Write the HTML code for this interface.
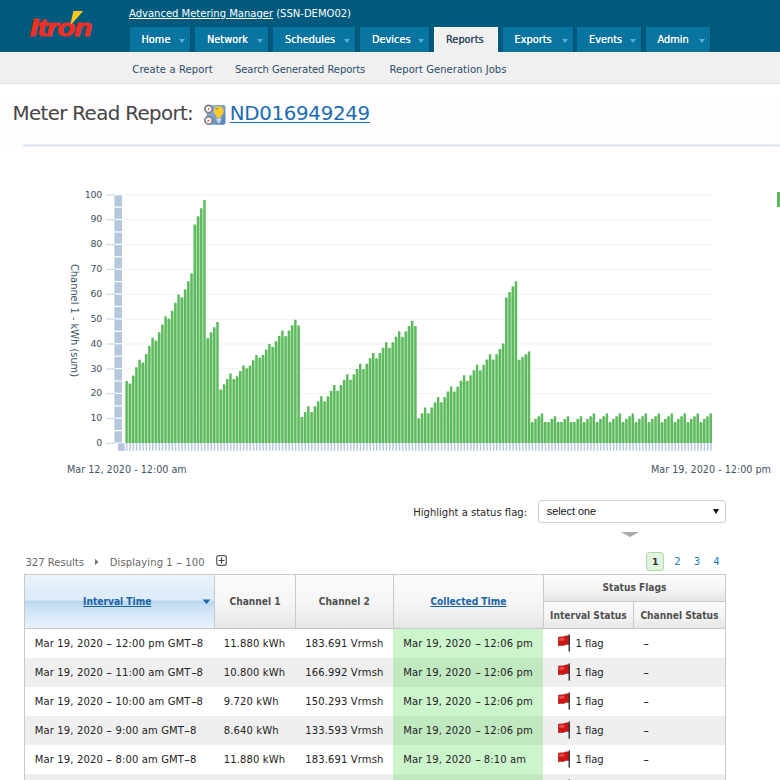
<!DOCTYPE html>
<html lang="en">
<head>
<meta charset="utf-8">
<title>Meter Read Report: ND016949249 - Advanced Metering Manager</title>
<style>
html,body{margin:0;padding:0;}
body{width:780px;height:780px;overflow:hidden;background:#fff;position:relative;
  font-family:"DejaVu Sans","Liberation Sans",sans-serif;font-size:10px;color:#333;}
a{color:inherit;}
#hdr{position:absolute;left:0;top:0;width:780px;height:52px;background:#005a7e;}
#logo{position:absolute;left:30px;top:13px;height:30px;line-height:30px;font-family:"Liberation Sans",sans-serif;
  font-weight:bold;font-style:italic;font-size:24.2px;color:#ee3124;letter-spacing:-0.45px;-webkit-text-stroke:1.05px #ee3124;
  transform:scaleX(1.2);transform-origin:0 50%;}
#spark{position:absolute;left:0;top:0;}
#app{position:absolute;left:129px;top:3.7px;height:20px;line-height:20px;color:#fff;font-size:10px;white-space:nowrap;}
#app a{text-decoration:underline;text-underline-offset:1px;}
.tab{position:absolute;top:27.4px;height:24.6px;background:#0a74a1;color:#fff;box-shadow:1px 0 0 #00506f;
  line-height:24.6px;font-size:10px;white-space:nowrap;}
.tab .tl{position:absolute;left:12px;top:1.1px;font-size:9.8px;text-shadow:0 0 0.6px #fff;}
.tab.act{background:#f0f0f0;color:#2f465c;box-shadow:inset 1px 1px 0 #fcfcfc,inset -1px 0 0 #fcfcfc;height:25.6px;z-index:2;}
.tab.act .tl{text-shadow:0 0 0.4px #2f465c;}
.tab .dd{position:absolute;right:5px;top:11.3px;width:0;height:0;border-left:3.7px solid transparent;border-right:3.7px solid transparent;border-top:4px solid #5ab0d4;}
#sub{position:absolute;left:0;top:52px;width:780px;height:31px;background:#f0f0f0;border-bottom:1px solid #dedede;box-shadow:inset 0 1px 0 #fbfbfb;}
#sub a{position:absolute;top:7.5px;height:20px;line-height:20px;color:#2e4c68;text-decoration:none;font-size:10px;letter-spacing:-0.08px;white-space:nowrap;}
#ttl{position:absolute;left:0;top:97px;width:780px;height:47.5px;background:#fefcfc;}
#ttlb{position:absolute;left:22.4px;top:144.2px;width:758px;height:3px;background:linear-gradient(#eef2f6,#e1e7ef 40%,#e3e9f0 70%,#f1f4f8);border-radius:2px 0 0 2px;}
#h1{position:absolute;left:12.5px;top:98.5px;height:30px;line-height:30px;font-size:19.8px;letter-spacing:-0.62px;color:#454545;white-space:nowrap;margin:0;font-weight:normal;}
#h1 a{position:absolute;left:217.3px;top:0;letter-spacing:-0.3px;color:#1a6db4;text-decoration:underline;text-decoration-thickness:1.4px;text-underline-offset:2px;}
#h1 svg{position:absolute;left:191.2px;top:5.3px;}
#chartw{position:absolute;left:0;top:170px;width:780px;height:320px;}
#hl{position:absolute;left:327px;top:502.5px;width:200px;height:20px;line-height:20px;text-align:right;font-size:10px;color:#262626;white-space:nowrap;}
#sel{position:absolute;left:538.2px;top:499.7px;width:186px;height:21.8px;border:1px solid #d0d0d0;border-radius:2.5px;background:#fff;box-sizing:content-box;}
#sel span{position:absolute;left:7.6px;top:0;height:21.6px;line-height:21.6px;font-family:"Liberation Sans",sans-serif;font-size:10.8px;color:#111;}
#sel i{position:absolute;right:6.2px;top:8.8px;width:0;height:0;border-left:3.1px solid transparent;border-right:3.1px solid transparent;border-top:5.6px solid #111;}
#arr{position:absolute;left:620.5px;top:531.6px;width:0;height:0;border-left:9.5px solid transparent;border-right:9.5px solid transparent;border-top:5px solid #aaa;}
#res{position:absolute;left:25.5px;top:552.5px;height:20px;line-height:20px;font-size:10px;color:#666;white-space:nowrap;}
#pg a{position:absolute;top:552px;width:18px;height:20px;line-height:20px;text-align:center;color:#2478bd;text-decoration:none;font-size:10px;}
#pg a.cur{top:552px;border:1px solid #b5d9b0;background:#e0f3dc;border-radius:3px;width:16px;height:17.4px;line-height:17.8px;color:#333;font-weight:bold;font-size:9.4px;}
#tbl{position:absolute;left:24.2px;top:574.2px;width:701.8px;height:210px;border-left:1px solid #c9c9c9;border-right:1px solid #c9c9c9;box-sizing:border-box;}
.th{position:absolute;box-sizing:border-box;border:1px solid #c9c9c9;border-left:none;background:linear-gradient(#fbfbfb 0%,#f6f6f6 50%,#e6e6e6 100%);
  font-family:"DejaVu Sans Condensed","DejaVu Sans","Liberation Sans",sans-serif;font-weight:bold;color:#505050;text-align:center;font-size:10.15px;white-space:nowrap;}
.th a{color:#1c64a4;text-decoration:underline;}
.hy{display:inline-block;width:5.9px;text-align:center;transform:scaleX(1.7);letter-spacing:0;}
.th.srt{background:linear-gradient(#e9f3fb 0%,#dcebf8 47%,#b9d7f0 50%,#c9e0f4 60%,#dcebf8 80%,#e6f1fb 100%);}
.row{position:absolute;left:0;width:700px;height:29px;background:#fff;}
.row.alt{background:#efefef;}
.c{position:absolute;top:0;height:29px;line-height:29.8px;font-size:10px;letter-spacing:0.13px;color:#222;white-space:nowrap;}
.c1{left:9.6px;}
.c2{left:198.5px;}
.c3{left:280px;}
.c4{left:368.2px;width:149.3px;padding-left:9.8px;background:#ccf5cc;box-sizing:border-box;}
.alt .c4{background:#c0e9c0;}
.c5{left:533px;}
.c6{left:617.5px;}
.flag{position:absolute;left:0;top:5.2px;}
.ft{position:absolute;left:17.4px;top:0;letter-spacing:-0.05px;}
</style>
</head>
<body>
<div id="hdr">
<div id="logo">Itron</div>
<svg id="spark" width="120" height="52"><polygon points="73.4,11 83.2,11 71.4,24.2 70.6,23.6" fill="#fbc81e"/></svg>
<div id="app"><a>Advanced Metering Manager</a> (SSN-DEMO02)</div>
<div class="tab" style="left:129.5px;width:60.5px"><span class="tl">Home</span><i class="dd"></i></div>
<div class="tab" style="left:195.0px;width:73.0px"><span class="tl">Network</span><i class="dd"></i></div>
<div class="tab" style="left:273.0px;width:82.0px"><span class="tl">Schedules</span><i class="dd"></i></div>
<div class="tab" style="left:360.0px;width:69.0px"><span class="tl">Devices</span><i class="dd"></i></div>
<div class="tab act" style="left:434.0px;width:63.5px"><span class="tl">Reports</span></div>
<div class="tab" style="left:502.5px;width:70.0px"><span class="tl">Exports</span><i class="dd"></i></div>
<div class="tab" style="left:577.0px;width:64.0px"><span class="tl">Events</span><i class="dd"></i></div>
<div class="tab" style="left:645.5px;width:64.2px"><span class="tl">Admin</span><i class="dd"></i></div>
</div>
<div id="sub">
<a style="left:132.3px;letter-spacing:0.1px">Create a Report</a>
<a style="left:235px">Search Generated Reports</a>
<a style="left:389.5px;letter-spacing:0.05px">Report Generation Jobs</a>
</div>
<div id="ttl"></div><div id="ttlb"></div>
<h1 id="h1">Meter Read Report: <svg width="22" height="22" viewBox="0 0 22 22">
<defs><linearGradient id="ib" x1="0" y1="0" x2="1" y2="1"><stop offset="0" stop-color="#9fbfe0"/><stop offset="1" stop-color="#4f7fb4"/></linearGradient></defs>
<rect x="2.6" y="1" width="18.9" height="19.8" rx="2.4" fill="url(#ib)"/>
<circle cx="4.6" cy="5" r="3.7" fill="#fbfbfb" stroke="#7c7c7c" stroke-width="1.7"/>
<circle cx="4.6" cy="16.4" r="3.7" fill="#fbfbfb" stroke="#7c7c7c" stroke-width="1.7"/>
<path d="M4 6 L5.2 3.8" stroke="#e8585c" stroke-width="1.1"/>
<path d="M3.4 17.4 L5.8 15.8" stroke="#e8585c" stroke-width="1.2"/>
<path d="M14.8 2.2 a4.9 4.9 0 0 1 3.1 8.7 c-0.6 0.8 -0.7 1.6 -0.8 2.9 h-4.6 c-0.1 -1.3 -0.2 -2.1 -0.8 -2.9 a4.9 4.9 0 0 1 3.1 -8.7z" fill="#fbc92e"/>
<path d="M12.4 5.6 l1.6 -1.4" stroke="#5c9a46" stroke-width="1.2"/>
<rect x="12.6" y="14.6" width="4.4" height="1.2" fill="#eef3f8"/><rect x="12.6" y="16.4" width="4.4" height="1.2" fill="#eef3f8"/><path d="M13.2 18.2 h3.2 l-1.6 1.4z" fill="#eef3f8"/>
</svg><a>ND016949249</a></h1>
<div id="chartw">
<svg id="chart" width="780" height="320" viewBox="0 170 780 320">
<rect x="125" y="442.90" width="587" height="1" fill="#f0f0f0"/>
<rect x="106.2" y="442.80" width="9" height="1.2" fill="#cdd9e9"/>
<rect x="125" y="418.05" width="587" height="1" fill="#f0f0f0"/>
<rect x="106.2" y="417.95" width="9" height="1.2" fill="#cdd9e9"/>
<rect x="125" y="393.20" width="587" height="1" fill="#f0f0f0"/>
<rect x="106.2" y="393.10" width="9" height="1.2" fill="#cdd9e9"/>
<rect x="125" y="368.35" width="587" height="1" fill="#f0f0f0"/>
<rect x="106.2" y="368.25" width="9" height="1.2" fill="#cdd9e9"/>
<rect x="125" y="343.50" width="587" height="1" fill="#f0f0f0"/>
<rect x="106.2" y="343.40" width="9" height="1.2" fill="#cdd9e9"/>
<rect x="125" y="318.65" width="587" height="1" fill="#f0f0f0"/>
<rect x="106.2" y="318.55" width="9" height="1.2" fill="#cdd9e9"/>
<rect x="125" y="293.80" width="587" height="1" fill="#f0f0f0"/>
<rect x="106.2" y="293.70" width="9" height="1.2" fill="#cdd9e9"/>
<rect x="125" y="268.95" width="587" height="1" fill="#f0f0f0"/>
<rect x="106.2" y="268.85" width="9" height="1.2" fill="#cdd9e9"/>
<rect x="125" y="244.10" width="587" height="1" fill="#f0f0f0"/>
<rect x="106.2" y="244.00" width="9" height="1.2" fill="#cdd9e9"/>
<rect x="125" y="219.25" width="587" height="1" fill="#f0f0f0"/>
<rect x="106.2" y="219.15" width="9" height="1.2" fill="#cdd9e9"/>
<rect x="125" y="194.40" width="587" height="1" fill="#f0f0f0"/>
<rect x="106.2" y="194.30" width="9" height="1.2" fill="#cdd9e9"/>
<rect x="114.4" y="195.30" width="7.7" height="11.2" fill="#b7c8dd"/>
<rect x="114.4" y="207.72" width="7.7" height="11.2" fill="#b7c8dd"/>
<rect x="114.4" y="220.14" width="7.7" height="11.2" fill="#b7c8dd"/>
<rect x="114.4" y="232.56" width="7.7" height="11.2" fill="#b7c8dd"/>
<rect x="114.4" y="244.98" width="7.7" height="11.2" fill="#b7c8dd"/>
<rect x="114.4" y="257.40" width="7.7" height="11.2" fill="#b7c8dd"/>
<rect x="114.4" y="269.82" width="7.7" height="11.2" fill="#b7c8dd"/>
<rect x="114.4" y="282.24" width="7.7" height="11.2" fill="#b7c8dd"/>
<rect x="114.4" y="294.66" width="7.7" height="11.2" fill="#b7c8dd"/>
<rect x="114.4" y="307.08" width="7.7" height="11.2" fill="#b7c8dd"/>
<rect x="114.4" y="319.50" width="7.7" height="11.2" fill="#b7c8dd"/>
<rect x="114.4" y="331.92" width="7.7" height="11.2" fill="#b7c8dd"/>
<rect x="114.4" y="344.34" width="7.7" height="11.2" fill="#b7c8dd"/>
<rect x="114.4" y="356.76" width="7.7" height="11.2" fill="#b7c8dd"/>
<rect x="114.4" y="369.18" width="7.7" height="11.2" fill="#b7c8dd"/>
<rect x="114.4" y="381.60" width="7.7" height="11.2" fill="#b7c8dd"/>
<rect x="114.4" y="394.02" width="7.7" height="11.2" fill="#b7c8dd"/>
<rect x="114.4" y="406.44" width="7.7" height="11.2" fill="#b7c8dd"/>
<rect x="114.4" y="418.86" width="7.7" height="11.2" fill="#b7c8dd"/>
<rect x="114.4" y="431.28" width="7.7" height="11.2" fill="#b7c8dd"/>
<rect x="118" y="443.2" width="6.8" height="7.6" fill="#b7c8dd"/>
<rect x="126.10" y="443.2" width="1.5" height="7.6" fill="#b9c9de"/>
<rect x="129.34" y="443.2" width="1.5" height="7.6" fill="#b9c9de"/>
<rect x="132.59" y="443.2" width="1.5" height="7.6" fill="#b9c9de"/>
<rect x="135.83" y="443.2" width="1.5" height="7.6" fill="#b9c9de"/>
<rect x="139.08" y="443.2" width="1.5" height="7.6" fill="#b9c9de"/>
<rect x="142.32" y="443.2" width="1.5" height="7.6" fill="#b9c9de"/>
<rect x="145.57" y="443.2" width="1.5" height="7.6" fill="#b9c9de"/>
<rect x="148.81" y="443.2" width="1.5" height="7.6" fill="#b9c9de"/>
<rect x="152.06" y="443.2" width="1.5" height="7.6" fill="#b9c9de"/>
<rect x="155.31" y="443.2" width="1.5" height="7.6" fill="#b9c9de"/>
<rect x="158.55" y="443.2" width="1.5" height="7.6" fill="#b9c9de"/>
<rect x="161.79" y="443.2" width="1.5" height="7.6" fill="#b9c9de"/>
<rect x="165.04" y="443.2" width="1.5" height="7.6" fill="#b9c9de"/>
<rect x="168.28" y="443.2" width="1.5" height="7.6" fill="#b9c9de"/>
<rect x="171.53" y="443.2" width="1.5" height="7.6" fill="#b9c9de"/>
<rect x="174.78" y="443.2" width="1.5" height="7.6" fill="#b9c9de"/>
<rect x="178.02" y="443.2" width="1.5" height="7.6" fill="#b9c9de"/>
<rect x="181.26" y="443.2" width="1.5" height="7.6" fill="#b9c9de"/>
<rect x="184.51" y="443.2" width="1.5" height="7.6" fill="#b9c9de"/>
<rect x="187.75" y="443.2" width="1.5" height="7.6" fill="#b9c9de"/>
<rect x="191.00" y="443.2" width="1.5" height="7.6" fill="#b9c9de"/>
<rect x="194.25" y="443.2" width="1.5" height="7.6" fill="#b9c9de"/>
<rect x="197.49" y="443.2" width="1.5" height="7.6" fill="#b9c9de"/>
<rect x="200.74" y="443.2" width="1.5" height="7.6" fill="#b9c9de"/>
<rect x="203.98" y="443.2" width="1.5" height="7.6" fill="#b9c9de"/>
<rect x="207.22" y="443.2" width="1.5" height="7.6" fill="#b9c9de"/>
<rect x="210.47" y="443.2" width="1.5" height="7.6" fill="#b9c9de"/>
<rect x="213.72" y="443.2" width="1.5" height="7.6" fill="#b9c9de"/>
<rect x="216.96" y="443.2" width="1.5" height="7.6" fill="#b9c9de"/>
<rect x="220.20" y="443.2" width="1.5" height="7.6" fill="#b9c9de"/>
<rect x="223.45" y="443.2" width="1.5" height="7.6" fill="#b9c9de"/>
<rect x="226.69" y="443.2" width="1.5" height="7.6" fill="#b9c9de"/>
<rect x="229.94" y="443.2" width="1.5" height="7.6" fill="#b9c9de"/>
<rect x="233.19" y="443.2" width="1.5" height="7.6" fill="#b9c9de"/>
<rect x="236.43" y="443.2" width="1.5" height="7.6" fill="#b9c9de"/>
<rect x="239.68" y="443.2" width="1.5" height="7.6" fill="#b9c9de"/>
<rect x="242.92" y="443.2" width="1.5" height="7.6" fill="#b9c9de"/>
<rect x="246.16" y="443.2" width="1.5" height="7.6" fill="#b9c9de"/>
<rect x="249.41" y="443.2" width="1.5" height="7.6" fill="#b9c9de"/>
<rect x="252.66" y="443.2" width="1.5" height="7.6" fill="#b9c9de"/>
<rect x="255.90" y="443.2" width="1.5" height="7.6" fill="#b9c9de"/>
<rect x="259.15" y="443.2" width="1.5" height="7.6" fill="#b9c9de"/>
<rect x="262.39" y="443.2" width="1.5" height="7.6" fill="#b9c9de"/>
<rect x="265.63" y="443.2" width="1.5" height="7.6" fill="#b9c9de"/>
<rect x="268.88" y="443.2" width="1.5" height="7.6" fill="#b9c9de"/>
<rect x="272.12" y="443.2" width="1.5" height="7.6" fill="#b9c9de"/>
<rect x="275.37" y="443.2" width="1.5" height="7.6" fill="#b9c9de"/>
<rect x="278.62" y="443.2" width="1.5" height="7.6" fill="#b9c9de"/>
<rect x="281.86" y="443.2" width="1.5" height="7.6" fill="#b9c9de"/>
<rect x="285.10" y="443.2" width="1.5" height="7.6" fill="#b9c9de"/>
<rect x="288.35" y="443.2" width="1.5" height="7.6" fill="#b9c9de"/>
<rect x="291.59" y="443.2" width="1.5" height="7.6" fill="#b9c9de"/>
<rect x="294.84" y="443.2" width="1.5" height="7.6" fill="#b9c9de"/>
<rect x="298.08" y="443.2" width="1.5" height="7.6" fill="#b9c9de"/>
<rect x="301.33" y="443.2" width="1.5" height="7.6" fill="#b9c9de"/>
<rect x="304.57" y="443.2" width="1.5" height="7.6" fill="#b9c9de"/>
<rect x="307.82" y="443.2" width="1.5" height="7.6" fill="#b9c9de"/>
<rect x="311.06" y="443.2" width="1.5" height="7.6" fill="#b9c9de"/>
<rect x="314.31" y="443.2" width="1.5" height="7.6" fill="#b9c9de"/>
<rect x="317.56" y="443.2" width="1.5" height="7.6" fill="#b9c9de"/>
<rect x="320.80" y="443.2" width="1.5" height="7.6" fill="#b9c9de"/>
<rect x="324.05" y="443.2" width="1.5" height="7.6" fill="#b9c9de"/>
<rect x="327.29" y="443.2" width="1.5" height="7.6" fill="#b9c9de"/>
<rect x="330.54" y="443.2" width="1.5" height="7.6" fill="#b9c9de"/>
<rect x="333.78" y="443.2" width="1.5" height="7.6" fill="#b9c9de"/>
<rect x="337.03" y="443.2" width="1.5" height="7.6" fill="#b9c9de"/>
<rect x="340.27" y="443.2" width="1.5" height="7.6" fill="#b9c9de"/>
<rect x="343.52" y="443.2" width="1.5" height="7.6" fill="#b9c9de"/>
<rect x="346.76" y="443.2" width="1.5" height="7.6" fill="#b9c9de"/>
<rect x="350.00" y="443.2" width="1.5" height="7.6" fill="#b9c9de"/>
<rect x="353.25" y="443.2" width="1.5" height="7.6" fill="#b9c9de"/>
<rect x="356.50" y="443.2" width="1.5" height="7.6" fill="#b9c9de"/>
<rect x="359.74" y="443.2" width="1.5" height="7.6" fill="#b9c9de"/>
<rect x="362.99" y="443.2" width="1.5" height="7.6" fill="#b9c9de"/>
<rect x="366.23" y="443.2" width="1.5" height="7.6" fill="#b9c9de"/>
<rect x="369.47" y="443.2" width="1.5" height="7.6" fill="#b9c9de"/>
<rect x="372.72" y="443.2" width="1.5" height="7.6" fill="#b9c9de"/>
<rect x="375.96" y="443.2" width="1.5" height="7.6" fill="#b9c9de"/>
<rect x="379.21" y="443.2" width="1.5" height="7.6" fill="#b9c9de"/>
<rect x="382.45" y="443.2" width="1.5" height="7.6" fill="#b9c9de"/>
<rect x="385.70" y="443.2" width="1.5" height="7.6" fill="#b9c9de"/>
<rect x="388.94" y="443.2" width="1.5" height="7.6" fill="#b9c9de"/>
<rect x="392.19" y="443.2" width="1.5" height="7.6" fill="#b9c9de"/>
<rect x="395.44" y="443.2" width="1.5" height="7.6" fill="#b9c9de"/>
<rect x="398.68" y="443.2" width="1.5" height="7.6" fill="#b9c9de"/>
<rect x="401.93" y="443.2" width="1.5" height="7.6" fill="#b9c9de"/>
<rect x="405.17" y="443.2" width="1.5" height="7.6" fill="#b9c9de"/>
<rect x="408.42" y="443.2" width="1.5" height="7.6" fill="#b9c9de"/>
<rect x="411.66" y="443.2" width="1.5" height="7.6" fill="#b9c9de"/>
<rect x="414.91" y="443.2" width="1.5" height="7.6" fill="#b9c9de"/>
<rect x="418.15" y="443.2" width="1.5" height="7.6" fill="#b9c9de"/>
<rect x="421.40" y="443.2" width="1.5" height="7.6" fill="#b9c9de"/>
<rect x="424.64" y="443.2" width="1.5" height="7.6" fill="#b9c9de"/>
<rect x="427.89" y="443.2" width="1.5" height="7.6" fill="#b9c9de"/>
<rect x="431.13" y="443.2" width="1.5" height="7.6" fill="#b9c9de"/>
<rect x="434.38" y="443.2" width="1.5" height="7.6" fill="#b9c9de"/>
<rect x="437.62" y="443.2" width="1.5" height="7.6" fill="#b9c9de"/>
<rect x="440.86" y="443.2" width="1.5" height="7.6" fill="#b9c9de"/>
<rect x="444.11" y="443.2" width="1.5" height="7.6" fill="#b9c9de"/>
<rect x="447.35" y="443.2" width="1.5" height="7.6" fill="#b9c9de"/>
<rect x="450.60" y="443.2" width="1.5" height="7.6" fill="#b9c9de"/>
<rect x="453.84" y="443.2" width="1.5" height="7.6" fill="#b9c9de"/>
<rect x="457.09" y="443.2" width="1.5" height="7.6" fill="#b9c9de"/>
<rect x="460.33" y="443.2" width="1.5" height="7.6" fill="#b9c9de"/>
<rect x="463.58" y="443.2" width="1.5" height="7.6" fill="#b9c9de"/>
<rect x="466.82" y="443.2" width="1.5" height="7.6" fill="#b9c9de"/>
<rect x="470.07" y="443.2" width="1.5" height="7.6" fill="#b9c9de"/>
<rect x="473.31" y="443.2" width="1.5" height="7.6" fill="#b9c9de"/>
<rect x="476.56" y="443.2" width="1.5" height="7.6" fill="#b9c9de"/>
<rect x="479.81" y="443.2" width="1.5" height="7.6" fill="#b9c9de"/>
<rect x="483.05" y="443.2" width="1.5" height="7.6" fill="#b9c9de"/>
<rect x="486.30" y="443.2" width="1.5" height="7.6" fill="#b9c9de"/>
<rect x="489.54" y="443.2" width="1.5" height="7.6" fill="#b9c9de"/>
<rect x="492.79" y="443.2" width="1.5" height="7.6" fill="#b9c9de"/>
<rect x="496.03" y="443.2" width="1.5" height="7.6" fill="#b9c9de"/>
<rect x="499.28" y="443.2" width="1.5" height="7.6" fill="#b9c9de"/>
<rect x="502.52" y="443.2" width="1.5" height="7.6" fill="#b9c9de"/>
<rect x="505.77" y="443.2" width="1.5" height="7.6" fill="#b9c9de"/>
<rect x="509.01" y="443.2" width="1.5" height="7.6" fill="#b9c9de"/>
<rect x="512.26" y="443.2" width="1.5" height="7.6" fill="#b9c9de"/>
<rect x="515.50" y="443.2" width="1.5" height="7.6" fill="#b9c9de"/>
<rect x="518.75" y="443.2" width="1.5" height="7.6" fill="#b9c9de"/>
<rect x="521.99" y="443.2" width="1.5" height="7.6" fill="#b9c9de"/>
<rect x="525.24" y="443.2" width="1.5" height="7.6" fill="#b9c9de"/>
<rect x="528.48" y="443.2" width="1.5" height="7.6" fill="#b9c9de"/>
<rect x="531.73" y="443.2" width="1.5" height="7.6" fill="#b9c9de"/>
<rect x="534.97" y="443.2" width="1.5" height="7.6" fill="#b9c9de"/>
<rect x="538.22" y="443.2" width="1.5" height="7.6" fill="#b9c9de"/>
<rect x="541.46" y="443.2" width="1.5" height="7.6" fill="#b9c9de"/>
<rect x="544.71" y="443.2" width="1.5" height="7.6" fill="#b9c9de"/>
<rect x="547.95" y="443.2" width="1.5" height="7.6" fill="#b9c9de"/>
<rect x="551.20" y="443.2" width="1.5" height="7.6" fill="#b9c9de"/>
<rect x="554.44" y="443.2" width="1.5" height="7.6" fill="#b9c9de"/>
<rect x="557.69" y="443.2" width="1.5" height="7.6" fill="#b9c9de"/>
<rect x="560.93" y="443.2" width="1.5" height="7.6" fill="#b9c9de"/>
<rect x="564.18" y="443.2" width="1.5" height="7.6" fill="#b9c9de"/>
<rect x="567.42" y="443.2" width="1.5" height="7.6" fill="#b9c9de"/>
<rect x="570.67" y="443.2" width="1.5" height="7.6" fill="#b9c9de"/>
<rect x="573.91" y="443.2" width="1.5" height="7.6" fill="#b9c9de"/>
<rect x="577.16" y="443.2" width="1.5" height="7.6" fill="#b9c9de"/>
<rect x="580.40" y="443.2" width="1.5" height="7.6" fill="#b9c9de"/>
<rect x="583.65" y="443.2" width="1.5" height="7.6" fill="#b9c9de"/>
<rect x="586.89" y="443.2" width="1.5" height="7.6" fill="#b9c9de"/>
<rect x="590.14" y="443.2" width="1.5" height="7.6" fill="#b9c9de"/>
<rect x="593.38" y="443.2" width="1.5" height="7.6" fill="#b9c9de"/>
<rect x="596.63" y="443.2" width="1.5" height="7.6" fill="#b9c9de"/>
<rect x="599.87" y="443.2" width="1.5" height="7.6" fill="#b9c9de"/>
<rect x="603.12" y="443.2" width="1.5" height="7.6" fill="#b9c9de"/>
<rect x="606.36" y="443.2" width="1.5" height="7.6" fill="#b9c9de"/>
<rect x="609.61" y="443.2" width="1.5" height="7.6" fill="#b9c9de"/>
<rect x="612.85" y="443.2" width="1.5" height="7.6" fill="#b9c9de"/>
<rect x="616.10" y="443.2" width="1.5" height="7.6" fill="#b9c9de"/>
<rect x="619.34" y="443.2" width="1.5" height="7.6" fill="#b9c9de"/>
<rect x="622.59" y="443.2" width="1.5" height="7.6" fill="#b9c9de"/>
<rect x="625.83" y="443.2" width="1.5" height="7.6" fill="#b9c9de"/>
<rect x="629.08" y="443.2" width="1.5" height="7.6" fill="#b9c9de"/>
<rect x="632.32" y="443.2" width="1.5" height="7.6" fill="#b9c9de"/>
<rect x="635.57" y="443.2" width="1.5" height="7.6" fill="#b9c9de"/>
<rect x="638.81" y="443.2" width="1.5" height="7.6" fill="#b9c9de"/>
<rect x="642.06" y="443.2" width="1.5" height="7.6" fill="#b9c9de"/>
<rect x="645.30" y="443.2" width="1.5" height="7.6" fill="#b9c9de"/>
<rect x="648.55" y="443.2" width="1.5" height="7.6" fill="#b9c9de"/>
<rect x="651.79" y="443.2" width="1.5" height="7.6" fill="#b9c9de"/>
<rect x="655.04" y="443.2" width="1.5" height="7.6" fill="#b9c9de"/>
<rect x="658.28" y="443.2" width="1.5" height="7.6" fill="#b9c9de"/>
<rect x="661.53" y="443.2" width="1.5" height="7.6" fill="#b9c9de"/>
<rect x="664.77" y="443.2" width="1.5" height="7.6" fill="#b9c9de"/>
<rect x="668.01" y="443.2" width="1.5" height="7.6" fill="#b9c9de"/>
<rect x="671.26" y="443.2" width="1.5" height="7.6" fill="#b9c9de"/>
<rect x="674.50" y="443.2" width="1.5" height="7.6" fill="#b9c9de"/>
<rect x="677.75" y="443.2" width="1.5" height="7.6" fill="#b9c9de"/>
<rect x="681.00" y="443.2" width="1.5" height="7.6" fill="#b9c9de"/>
<rect x="684.24" y="443.2" width="1.5" height="7.6" fill="#b9c9de"/>
<rect x="687.49" y="443.2" width="1.5" height="7.6" fill="#b9c9de"/>
<rect x="690.73" y="443.2" width="1.5" height="7.6" fill="#b9c9de"/>
<rect x="693.98" y="443.2" width="1.5" height="7.6" fill="#b9c9de"/>
<rect x="697.22" y="443.2" width="1.5" height="7.6" fill="#b9c9de"/>
<rect x="700.47" y="443.2" width="1.5" height="7.6" fill="#b9c9de"/>
<rect x="703.71" y="443.2" width="1.5" height="7.6" fill="#b9c9de"/>
<rect x="706.96" y="443.2" width="1.5" height="7.6" fill="#b9c9de"/>
<rect x="710.20" y="443.2" width="1.5" height="7.6" fill="#b9c9de"/>
<path d="M127.65 443.00V384.51H128.84V443.00zM130.90 443.00V384.51H132.09V443.00zM134.14 443.00V376.56H135.34V443.00zM137.38 443.00V368.36H138.58V443.00zM140.63 443.00V363.39H141.82V443.00zM143.88 443.00V363.39H145.07V443.00zM147.12 443.00V354.94H148.31V443.00zM150.37 443.00V346.74H151.56V443.00zM153.61 443.00V341.52H154.81V443.00zM156.86 443.00V341.52H158.05V443.00zM160.10 443.00V333.32H161.30V443.00zM163.34 443.00V325.62H164.54V443.00zM166.59 443.00V319.65H167.78V443.00zM169.84 443.00V319.65H171.03V443.00zM173.08 443.00V311.70H174.28V443.00zM176.33 443.00V303.75H177.52V443.00zM179.57 443.00V298.28H180.76V443.00zM182.81 443.00V298.28H184.01V443.00zM186.06 443.00V290.33H187.25V443.00zM189.31 443.00V282.13H190.50V443.00zM192.55 443.00V274.18H193.75V443.00zM195.80 443.00V225.47H196.99V443.00zM199.04 443.00V217.27H200.24V443.00zM202.29 443.00V209.32H203.48V443.00zM205.53 443.00V339.04H206.72V443.00zM208.78 443.00V339.04H209.97V443.00zM212.02 443.00V333.32H213.22V443.00zM215.27 443.00V328.35H216.46V443.00zM218.51 443.00V390.48H219.70V443.00zM221.75 443.00V390.48H222.95V443.00zM225.00 443.00V385.26H226.19V443.00zM228.25 443.00V380.04H229.44V443.00zM231.49 443.00V380.04H232.69V443.00zM234.74 443.00V380.04H235.93V443.00zM237.98 443.00V377.30H239.18V443.00zM241.23 443.00V372.09H242.42V443.00zM244.47 443.00V369.35H245.67V443.00zM247.72 443.00V369.35H248.91V443.00zM250.96 443.00V366.62H252.16V443.00zM254.21 443.00V361.15H255.40V443.00zM257.45 443.00V358.42H258.64V443.00zM260.70 443.00V358.42H261.89V443.00zM263.94 443.00V355.93H265.13V443.00zM267.19 443.00V350.47H268.38V443.00zM270.43 443.00V347.73H271.62V443.00zM273.68 443.00V347.73H274.87V443.00zM276.92 443.00V342.27H278.12V443.00zM280.17 443.00V337.05H281.36V443.00zM283.41 443.00V337.05H284.60V443.00zM286.65 443.00V337.05H287.85V443.00zM289.90 443.00V331.58H291.09V443.00zM293.14 443.00V326.36H294.34V443.00zM296.39 443.00V326.36H297.58V443.00zM299.63 443.00V418.06H300.83V443.00zM302.88 443.00V418.06H304.07V443.00zM306.12 443.00V413.09H307.32V443.00zM309.37 443.00V413.09H310.56V443.00zM312.62 443.00V413.09H313.81V443.00zM315.86 443.00V407.37H317.06V443.00zM319.11 443.00V402.15H320.30V443.00zM322.35 443.00V402.15H323.55V443.00zM325.60 443.00V402.15H326.79V443.00zM328.84 443.00V397.19H330.04V443.00zM332.09 443.00V391.72H333.28V443.00zM335.33 443.00V391.72H336.53V443.00zM338.58 443.00V391.72H339.77V443.00zM341.82 443.00V386.00H343.02V443.00zM345.07 443.00V380.78H346.26V443.00zM348.31 443.00V380.78H349.50V443.00zM351.56 443.00V380.78H352.75V443.00zM354.80 443.00V375.32H356.00V443.00zM358.05 443.00V370.10H359.24V443.00zM361.29 443.00V370.10H362.49V443.00zM364.54 443.00V370.10H365.73V443.00zM367.78 443.00V364.63H368.97V443.00zM371.02 443.00V359.16H372.22V443.00zM374.27 443.00V359.16H375.46V443.00zM377.51 443.00V359.16H378.71V443.00zM380.76 443.00V353.95H381.95V443.00zM384.00 443.00V348.73H385.20V443.00zM387.25 443.00V348.73H388.44V443.00zM390.50 443.00V348.73H391.69V443.00zM393.74 443.00V343.26H394.94V443.00zM396.99 443.00V337.79H398.18V443.00zM400.23 443.00V337.79H401.43V443.00zM403.48 443.00V337.79H404.67V443.00zM406.72 443.00V332.33H407.92V443.00zM409.97 443.00V327.11H411.16V443.00zM413.21 443.00V327.11H414.41V443.00zM416.46 443.00V419.30H417.65V443.00zM419.70 443.00V419.30H420.90V443.00zM422.95 443.00V414.33H424.14V443.00zM426.19 443.00V414.33H427.39V443.00zM429.44 443.00V414.33H430.63V443.00zM432.68 443.00V408.62H433.88V443.00zM435.93 443.00V403.15H437.12V443.00zM439.17 443.00V403.15H440.36V443.00zM442.41 443.00V403.15H443.61V443.00zM445.66 443.00V397.93H446.85V443.00zM448.90 443.00V392.46H450.10V443.00zM452.15 443.00V392.46H453.34V443.00zM455.39 443.00V392.46H456.59V443.00zM458.64 443.00V387.49H459.83V443.00zM461.88 443.00V381.78H463.08V443.00zM465.13 443.00V381.78H466.32V443.00zM468.38 443.00V381.78H469.57V443.00zM471.62 443.00V376.31H472.81V443.00zM474.87 443.00V371.34H476.06V443.00zM478.11 443.00V371.34H479.31V443.00zM481.36 443.00V371.34H482.55V443.00zM484.60 443.00V365.63H485.80V443.00zM487.85 443.00V360.41H489.04V443.00zM491.09 443.00V360.41H492.29V443.00zM494.34 443.00V360.41H495.53V443.00zM497.58 443.00V355.19H498.78V443.00zM500.83 443.00V349.97H502.02V443.00zM504.07 443.00V344.50H505.27V443.00zM507.32 443.00V298.41H508.51V443.00zM510.56 443.00V293.06H511.76V443.00zM513.81 443.00V287.35H515.00V443.00zM517.05 443.00V360.66H518.25V443.00zM520.30 443.00V360.66H521.49V443.00zM523.54 443.00V357.67H524.74V443.00zM526.78 443.00V355.19H527.98V443.00zM530.03 443.00V423.03H531.23V443.00zM533.27 443.00V423.03H534.47V443.00zM536.52 443.00V419.92H537.72V443.00zM539.76 443.00V417.31H540.96V443.00zM543.01 443.00V423.03H544.21V443.00zM546.25 443.00V423.03H547.45V443.00zM549.50 443.00V423.03H550.70V443.00zM552.75 443.00V419.92H553.94V443.00zM555.99 443.00V423.03H557.19V443.00zM559.24 443.00V423.03H560.43V443.00zM562.48 443.00V423.03H563.68V443.00zM565.73 443.00V419.92H566.92V443.00zM568.97 443.00V423.03H570.17V443.00zM572.22 443.00V423.03H573.41V443.00zM575.46 443.00V423.03H576.66V443.00zM578.71 443.00V419.92H579.90V443.00zM581.95 443.00V423.03H583.15V443.00zM585.20 443.00V423.03H586.39V443.00zM588.44 443.00V419.92H589.64V443.00zM591.69 443.00V417.31H592.88V443.00zM594.93 443.00V423.03H596.13V443.00zM598.18 443.00V423.03H599.37V443.00zM601.42 443.00V419.92H602.62V443.00zM604.67 443.00V417.31H605.86V443.00zM607.91 443.00V423.03H609.11V443.00zM611.15 443.00V423.03H612.35V443.00zM614.40 443.00V419.92H615.60V443.00zM617.64 443.00V417.31H618.84V443.00zM620.89 443.00V423.03H622.09V443.00zM624.13 443.00V423.03H625.33V443.00zM627.38 443.00V419.92H628.58V443.00zM630.62 443.00V417.31H631.82V443.00zM633.87 443.00V423.03H635.07V443.00zM637.12 443.00V423.03H638.31V443.00zM640.36 443.00V419.92H641.56V443.00zM643.61 443.00V417.31H644.80V443.00zM646.85 443.00V423.03H648.05V443.00zM650.10 443.00V423.03H651.29V443.00zM653.34 443.00V419.92H654.54V443.00zM656.59 443.00V417.31H657.78V443.00zM659.83 443.00V423.03H661.03V443.00zM663.08 443.00V423.03H664.27V443.00zM666.32 443.00V419.92H667.52V443.00zM669.56 443.00V417.31H670.76V443.00zM672.81 443.00V423.03H674.00V443.00zM676.05 443.00V423.03H677.25V443.00zM679.30 443.00V419.92H680.50V443.00zM682.54 443.00V417.31H683.74V443.00zM685.79 443.00V423.03H686.99V443.00zM689.03 443.00V423.03H690.23V443.00zM692.28 443.00V419.92H693.48V443.00zM695.52 443.00V417.31H696.72V443.00zM698.77 443.00V423.03H699.97V443.00zM702.01 443.00V423.03H703.21V443.00zM705.26 443.00V419.92H706.46V443.00zM708.50 443.00V417.31H709.70V443.00z" fill="#c6e7c6"/>
<path d="M125.40 443.00V381.03H127.85V443.00zM128.65 443.00V383.51H131.09V443.00zM131.89 443.00V375.56H134.34V443.00zM135.13 443.00V367.36H137.58V443.00zM138.38 443.00V359.66H140.83V443.00zM141.62 443.00V362.39H144.07V443.00zM144.87 443.00V353.94H147.32V443.00zM148.12 443.00V345.74H150.56V443.00zM151.36 443.00V337.79H153.81V443.00zM154.61 443.00V340.52H157.06V443.00zM157.85 443.00V332.32H160.30V443.00zM161.09 443.00V324.62H163.54V443.00zM164.34 443.00V316.17H166.79V443.00zM167.59 443.00V318.65H170.03V443.00zM170.83 443.00V310.70H173.28V443.00zM174.08 443.00V302.75H176.53V443.00zM177.32 443.00V294.55H179.77V443.00zM180.56 443.00V297.28H183.01V443.00zM183.81 443.00V289.33H186.26V443.00zM187.06 443.00V281.13H189.50V443.00zM190.30 443.00V273.18H192.75V443.00zM193.55 443.00V224.47H196.00V443.00zM196.79 443.00V216.27H199.24V443.00zM200.04 443.00V208.32H202.49V443.00zM203.28 443.00V200.12H205.73V443.00zM206.53 443.00V338.04H208.97V443.00zM209.77 443.00V332.32H212.22V443.00zM213.02 443.00V327.35H215.47V443.00zM216.26 443.00V321.88H218.71V443.00zM219.50 443.00V389.48H221.95V443.00zM222.75 443.00V384.26H225.20V443.00zM226.00 443.00V379.04H228.44V443.00zM229.24 443.00V373.57H231.69V443.00zM232.49 443.00V379.04H234.94V443.00zM235.73 443.00V376.30H238.18V443.00zM238.98 443.00V371.09H241.43V443.00zM242.22 443.00V365.62H244.67V443.00zM245.47 443.00V368.35H247.91V443.00zM248.71 443.00V365.62H251.16V443.00zM251.96 443.00V360.15H254.41V443.00zM255.20 443.00V354.93H257.65V443.00zM258.45 443.00V357.42H260.90V443.00zM261.69 443.00V354.93H264.14V443.00zM264.94 443.00V349.47H267.38V443.00zM268.18 443.00V344.00H270.63V443.00zM271.43 443.00V346.73H273.88V443.00zM274.67 443.00V341.27H277.12V443.00zM277.92 443.00V336.05H280.37V443.00zM281.16 443.00V330.58H283.61V443.00zM284.40 443.00V336.05H286.85V443.00zM287.65 443.00V330.58H290.10V443.00zM290.89 443.00V325.36H293.34V443.00zM294.14 443.00V319.65H296.59V443.00zM297.38 443.00V325.36H299.83V443.00zM300.63 443.00V417.06H303.08V443.00zM303.88 443.00V412.09H306.32V443.00zM307.12 443.00V406.37H309.57V443.00zM310.37 443.00V412.09H312.81V443.00zM313.61 443.00V406.37H316.06V443.00zM316.86 443.00V401.15H319.31V443.00zM320.10 443.00V396.19H322.55V443.00zM323.35 443.00V401.15H325.80V443.00zM326.59 443.00V396.19H329.04V443.00zM329.84 443.00V390.72H332.29V443.00zM333.08 443.00V385.00H335.53V443.00zM336.33 443.00V390.72H338.78V443.00zM339.57 443.00V385.00H342.02V443.00zM342.82 443.00V379.78H345.27V443.00zM346.06 443.00V374.32H348.51V443.00zM349.31 443.00V379.78H351.75V443.00zM352.55 443.00V374.32H355.00V443.00zM355.80 443.00V369.10H358.25V443.00zM359.04 443.00V363.63H361.49V443.00zM362.29 443.00V369.10H364.74V443.00zM365.53 443.00V363.63H367.98V443.00zM368.77 443.00V358.16H371.22V443.00zM372.02 443.00V352.95H374.47V443.00zM375.26 443.00V358.16H377.71V443.00zM378.51 443.00V352.95H380.96V443.00zM381.75 443.00V347.73H384.20V443.00zM385.00 443.00V342.26H387.45V443.00zM388.25 443.00V347.73H390.69V443.00zM391.49 443.00V342.26H393.94V443.00zM394.74 443.00V336.79H397.19V443.00zM397.98 443.00V331.33H400.43V443.00zM401.23 443.00V336.79H403.68V443.00zM404.47 443.00V331.33H406.92V443.00zM407.72 443.00V326.11H410.17V443.00zM410.96 443.00V320.64H413.41V443.00zM414.21 443.00V326.11H416.66V443.00zM417.45 443.00V418.30H419.90V443.00zM420.70 443.00V413.33H423.15V443.00zM423.94 443.00V407.62H426.39V443.00zM427.19 443.00V413.33H429.64V443.00zM430.43 443.00V407.62H432.88V443.00zM433.68 443.00V402.15H436.13V443.00zM436.92 443.00V396.93H439.37V443.00zM440.16 443.00V402.15H442.61V443.00zM443.41 443.00V396.93H445.86V443.00zM446.65 443.00V391.46H449.10V443.00zM449.90 443.00V386.49H452.35V443.00zM453.14 443.00V391.46H455.59V443.00zM456.39 443.00V386.49H458.84V443.00zM459.63 443.00V380.78H462.08V443.00zM462.88 443.00V375.31H465.33V443.00zM466.12 443.00V380.78H468.57V443.00zM469.37 443.00V375.31H471.82V443.00zM472.62 443.00V370.34H475.06V443.00zM475.86 443.00V364.63H478.31V443.00zM479.11 443.00V370.34H481.56V443.00zM482.35 443.00V364.63H484.80V443.00zM485.60 443.00V359.41H488.05V443.00zM488.84 443.00V354.19H491.29V443.00zM492.09 443.00V359.41H494.54V443.00zM495.33 443.00V354.19H497.78V443.00zM498.58 443.00V348.97H501.03V443.00zM501.82 443.00V343.50H504.27V443.00zM505.07 443.00V297.41H507.52V443.00zM508.31 443.00V292.06H510.76V443.00zM511.56 443.00V286.35H514.01V443.00zM514.80 443.00V281.13H517.25V443.00zM518.05 443.00V359.66H520.50V443.00zM521.29 443.00V356.67H523.74V443.00zM524.53 443.00V354.19H526.99V443.00zM527.78 443.00V351.45H530.23V443.00zM531.02 443.00V422.03H533.48V443.00zM534.27 443.00V418.92H536.72V443.00zM537.51 443.00V416.31H539.97V443.00zM540.76 443.00V413.58H543.21V443.00zM544.00 443.00V422.03H546.46V443.00zM547.25 443.00V422.03H549.70V443.00zM550.50 443.00V418.92H552.95V443.00zM553.74 443.00V416.31H556.19V443.00zM556.99 443.00V422.03H559.44V443.00zM560.23 443.00V422.03H562.68V443.00zM563.48 443.00V418.92H565.93V443.00zM566.72 443.00V416.31H569.17V443.00zM569.97 443.00V422.03H572.42V443.00zM573.21 443.00V422.03H575.66V443.00zM576.46 443.00V418.92H578.91V443.00zM579.70 443.00V416.31H582.15V443.00zM582.95 443.00V422.03H585.40V443.00zM586.19 443.00V418.92H588.64V443.00zM589.44 443.00V416.31H591.89V443.00zM592.68 443.00V413.58H595.13V443.00zM595.93 443.00V422.03H598.38V443.00zM599.17 443.00V418.92H601.62V443.00zM602.42 443.00V416.31H604.87V443.00zM605.66 443.00V413.58H608.11V443.00zM608.90 443.00V422.03H611.36V443.00zM612.15 443.00V418.92H614.60V443.00zM615.39 443.00V416.31H617.85V443.00zM618.64 443.00V413.58H621.09V443.00zM621.88 443.00V422.03H624.34V443.00zM625.13 443.00V418.92H627.58V443.00zM628.38 443.00V416.31H630.83V443.00zM631.62 443.00V413.58H634.07V443.00zM634.87 443.00V422.03H637.32V443.00zM638.11 443.00V418.92H640.56V443.00zM641.36 443.00V416.31H643.81V443.00zM644.60 443.00V413.58H647.05V443.00zM647.85 443.00V422.03H650.30V443.00zM651.09 443.00V418.92H653.54V443.00zM654.34 443.00V416.31H656.79V443.00zM657.58 443.00V413.58H660.03V443.00zM660.83 443.00V422.03H663.28V443.00zM664.07 443.00V418.92H666.52V443.00zM667.31 443.00V416.31H669.76V443.00zM670.56 443.00V413.58H673.01V443.00zM673.80 443.00V422.03H676.25V443.00zM677.05 443.00V418.92H679.50V443.00zM680.29 443.00V416.31H682.75V443.00zM683.54 443.00V413.58H685.99V443.00zM686.78 443.00V422.03H689.24V443.00zM690.03 443.00V418.92H692.48V443.00zM693.27 443.00V416.31H695.73V443.00zM696.52 443.00V413.58H698.97V443.00zM699.76 443.00V422.03H702.22V443.00zM703.01 443.00V418.92H705.46V443.00zM706.25 443.00V416.31H708.71V443.00zM709.50 443.00V413.58H711.95V443.00z" fill="#5cb95c"/>
<g font-family="'DejaVu Sans', 'Liberation Sans', sans-serif" font-size="9.4" letter-spacing="-0.25" fill="#3a4e5e" text-anchor="end">
<text x="101.9" y="446.10">0</text>
<text x="101.9" y="421.25">10</text>
<text x="101.9" y="396.40">20</text>
<text x="101.9" y="371.55">30</text>
<text x="101.9" y="346.70">40</text>
<text x="101.9" y="321.85">50</text>
<text x="101.9" y="297.00">60</text>
<text x="101.9" y="272.15">70</text>
<text x="101.9" y="247.30">80</text>
<text x="101.9" y="222.45">90</text>
<text x="101.9" y="197.60">100</text>
</g>
<g font-family="'DejaVu Sans', 'Liberation Sans', sans-serif" font-size="9.65" fill="#3f5363">
<text x="67" y="472.6">Mar 12, 2020 - 12:00 am</text>
<text x="771" y="472.6" text-anchor="end">Mar 19, 2020 - 12:00 pm</text>
<text transform="translate(70.8 264) rotate(90)" x="0" y="0" font-size="9.85">Channel 1 - kWh (sum)</text>
</g>
<rect x="777" y="192" width="3" height="15" fill="#5cb95c"/>
</svg>
</div>
<div id="hl">Highlight a status flag:</div>
<div id="sel"><span>select one</span><i></i></div>
<div id="arr"></div>
<div id="res">327 Results <svg width="8" height="8" viewBox="0 0 8 8" style="margin:0 5.5px 0 6px"><path d="M2 0.8 L5.6 4 L2 7.2z" fill="#777"/></svg> <span style="letter-spacing:0.1px">Displaying 1 <span class="hy">-</span> 100</span> <svg width="11" height="11" viewBox="0 0 11 11" style="margin-left:8.6px;vertical-align:-0.2px"><rect x="0.7" y="0.7" width="9.6" height="9.6" rx="2" fill="#fff" stroke="#5a5a5a" stroke-width="1.2"/><path d="M5.5 2.6 V8.4 M2.6 5.5 H8.4" stroke="#444" stroke-width="1.2"/></svg></div>
<div id="pg"><a class="cur" style="left:646.2px">1</a><a style="left:668.5px">2</a><a style="left:688px">3</a><a style="left:707.5px">4</a></div>
<div id="tbl">
<div class="th srt" style="left:0;top:0;width:190px;height:54.5px;line-height:53px;padding-right:5px"><a>Interval Time</a><svg width="9" height="6" viewBox="0 0 9 6" style="position:absolute;right:2.9px;top:23.6px"><path d="M0.7 0.6 H8.3 L4.5 5z" fill="#1c64a4"/></svg></div>
<div class="th" style="left:190px;top:0;width:80.7px;height:54.5px;line-height:53px">Channel 1</div>
<div class="th" style="left:270.7px;top:0;width:98px;height:54.5px;line-height:53px">Channel 2</div>
<div class="th" style="left:368.7px;top:0;width:150px;height:54.5px;line-height:53px"><a>Collected Time</a></div>
<div class="th" style="left:518.7px;top:0;width:182.2px;height:27.5px;line-height:26px">Status Flags</div>
<div class="th" style="left:518.7px;top:26.5px;width:90px;height:28px;line-height:27px">Interval Status</div>
<div class="th" style="left:608.7px;top:26.5px;width:92.2px;height:28px;line-height:27px">Channel Status</div>
<div id="rows" style="position:absolute;left:0;top:-574.2px">
<div class="row" style="top:629px">
<span class="c c1">Mar 19, 2020 <span class="hy">-</span> 12:00 pm GMT<span class="hy">-</span>8</span><span class="c c2">11.880 kWh</span><span class="c c3">183.691 Vrmsh</span>
<span class="c c4">Mar 19, 2020 <span class="hy">-</span> 12:06 pm</span><span class="c c5"><svg class="flag" width="16" height="19" viewBox="0 0 16 19"><path d="M0.4 3.4 C2.6 2.3 4.4 3.5 6.4 2.6 C8 1.9 9.4 1.7 10.7 1.9 L10.7 10.5 C9.4 10.1 8 10.3 6.4 11.1 C4.4 12.1 2.6 10.7 0.4 11.8 Z" fill="#d21313" stroke="#9c0c0c" stroke-width="0.7"/><path d="M1.2 4 C3 3.2 4.6 4.2 6.4 3.4 L6.4 6.4 C4.6 7.2 3 6.2 1.2 7 Z" fill="#f07a7a" opacity="0.55"/><rect x="10.6" y="0.4" width="1.25" height="17.2" fill="#1c1c1c"/></svg><span class="ft">1 flag</span></span><span class="c c6"><span class="hy">-</span></span>
</div>
<div class="row alt" style="top:658px">
<span class="c c1">Mar 19, 2020 <span class="hy">-</span> 11:00 am GMT<span class="hy">-</span>8</span><span class="c c2">10.800 kWh</span><span class="c c3">166.992 Vrmsh</span>
<span class="c c4">Mar 19, 2020 <span class="hy">-</span> 12:06 pm</span><span class="c c5"><svg class="flag" width="16" height="19" viewBox="0 0 16 19"><path d="M0.4 3.4 C2.6 2.3 4.4 3.5 6.4 2.6 C8 1.9 9.4 1.7 10.7 1.9 L10.7 10.5 C9.4 10.1 8 10.3 6.4 11.1 C4.4 12.1 2.6 10.7 0.4 11.8 Z" fill="#d21313" stroke="#9c0c0c" stroke-width="0.7"/><path d="M1.2 4 C3 3.2 4.6 4.2 6.4 3.4 L6.4 6.4 C4.6 7.2 3 6.2 1.2 7 Z" fill="#f07a7a" opacity="0.55"/><rect x="10.6" y="0.4" width="1.25" height="17.2" fill="#1c1c1c"/></svg><span class="ft">1 flag</span></span><span class="c c6"><span class="hy">-</span></span>
</div>
<div class="row" style="top:687px">
<span class="c c1">Mar 19, 2020 <span class="hy">-</span> 10:00 am GMT<span class="hy">-</span>8</span><span class="c c2">9.720 kWh</span><span class="c c3">150.293 Vrmsh</span>
<span class="c c4">Mar 19, 2020 <span class="hy">-</span> 12:06 pm</span><span class="c c5"><svg class="flag" width="16" height="19" viewBox="0 0 16 19"><path d="M0.4 3.4 C2.6 2.3 4.4 3.5 6.4 2.6 C8 1.9 9.4 1.7 10.7 1.9 L10.7 10.5 C9.4 10.1 8 10.3 6.4 11.1 C4.4 12.1 2.6 10.7 0.4 11.8 Z" fill="#d21313" stroke="#9c0c0c" stroke-width="0.7"/><path d="M1.2 4 C3 3.2 4.6 4.2 6.4 3.4 L6.4 6.4 C4.6 7.2 3 6.2 1.2 7 Z" fill="#f07a7a" opacity="0.55"/><rect x="10.6" y="0.4" width="1.25" height="17.2" fill="#1c1c1c"/></svg><span class="ft">1 flag</span></span><span class="c c6"><span class="hy">-</span></span>
</div>
<div class="row alt" style="top:716px">
<span class="c c1">Mar 19, 2020 <span class="hy">-</span> 9:00 am GMT<span class="hy">-</span>8</span><span class="c c2">8.640 kWh</span><span class="c c3">133.593 Vrmsh</span>
<span class="c c4">Mar 19, 2020 <span class="hy">-</span> 12:06 pm</span><span class="c c5"><svg class="flag" width="16" height="19" viewBox="0 0 16 19"><path d="M0.4 3.4 C2.6 2.3 4.4 3.5 6.4 2.6 C8 1.9 9.4 1.7 10.7 1.9 L10.7 10.5 C9.4 10.1 8 10.3 6.4 11.1 C4.4 12.1 2.6 10.7 0.4 11.8 Z" fill="#d21313" stroke="#9c0c0c" stroke-width="0.7"/><path d="M1.2 4 C3 3.2 4.6 4.2 6.4 3.4 L6.4 6.4 C4.6 7.2 3 6.2 1.2 7 Z" fill="#f07a7a" opacity="0.55"/><rect x="10.6" y="0.4" width="1.25" height="17.2" fill="#1c1c1c"/></svg><span class="ft">1 flag</span></span><span class="c c6"><span class="hy">-</span></span>
</div>
<div class="row" style="top:745px">
<span class="c c1">Mar 19, 2020 <span class="hy">-</span> 8:00 am GMT<span class="hy">-</span>8</span><span class="c c2">11.880 kWh</span><span class="c c3">183.691 Vrmsh</span>
<span class="c c4">Mar 19, 2020 <span class="hy">-</span> 8:10 am</span><span class="c c5"><svg class="flag" width="16" height="19" viewBox="0 0 16 19"><path d="M0.4 3.4 C2.6 2.3 4.4 3.5 6.4 2.6 C8 1.9 9.4 1.7 10.7 1.9 L10.7 10.5 C9.4 10.1 8 10.3 6.4 11.1 C4.4 12.1 2.6 10.7 0.4 11.8 Z" fill="#d21313" stroke="#9c0c0c" stroke-width="0.7"/><path d="M1.2 4 C3 3.2 4.6 4.2 6.4 3.4 L6.4 6.4 C4.6 7.2 3 6.2 1.2 7 Z" fill="#f07a7a" opacity="0.55"/><rect x="10.6" y="0.4" width="1.25" height="17.2" fill="#1c1c1c"/></svg><span class="ft">1 flag</span></span><span class="c c6"><span class="hy">-</span></span>
</div>
<div class="row alt" style="top:774px">
<span class="c c1">Mar 19, 2020 <span class="hy">-</span> 7:00 am GMT<span class="hy">-</span>8</span><span class="c c2">10.800 kWh</span><span class="c c3">166.992 Vrmsh</span>
<span class="c c4">Mar 19, 2020 <span class="hy">-</span> 8:10 am</span><span class="c c5"><svg class="flag" width="16" height="19" viewBox="0 0 16 19"><path d="M0.4 3.4 C2.6 2.3 4.4 3.5 6.4 2.6 C8 1.9 9.4 1.7 10.7 1.9 L10.7 10.5 C9.4 10.1 8 10.3 6.4 11.1 C4.4 12.1 2.6 10.7 0.4 11.8 Z" fill="#d21313" stroke="#9c0c0c" stroke-width="0.7"/><path d="M1.2 4 C3 3.2 4.6 4.2 6.4 3.4 L6.4 6.4 C4.6 7.2 3 6.2 1.2 7 Z" fill="#f07a7a" opacity="0.55"/><rect x="10.6" y="0.4" width="1.25" height="17.2" fill="#1c1c1c"/></svg><span class="ft">1 flag</span></span><span class="c c6"><span class="hy">-</span></span>
</div>
</div>
</div>
</body>
</html>
